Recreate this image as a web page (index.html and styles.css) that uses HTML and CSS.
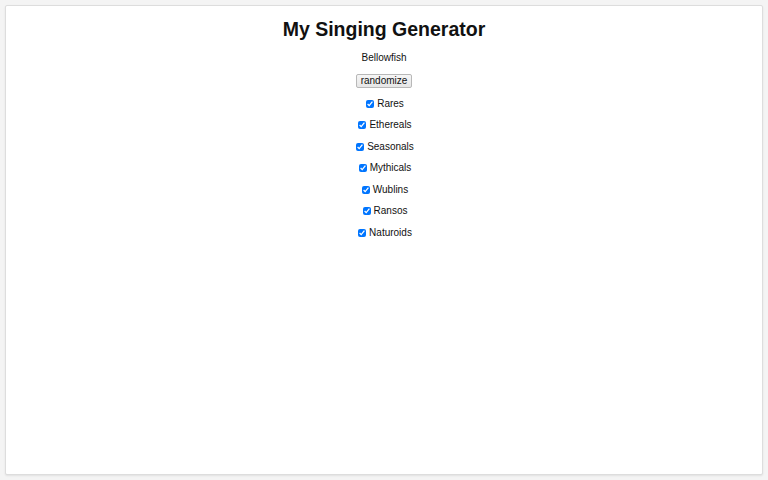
FILE: index.html
```html
<html>
    <head>
        <title>My Singing Generator</title>
        <link rel="stylesheet" href="styles.css">
    </head>
    <body>
        <div class="card">
            <h1>My Singing Generator</h1>
            <p id="monster">Bellowfish</p>
            <p><button id="randomize">randomize</button></p>
            <p><label><input type="checkbox" checked />Rares</label></p>
            <p><label><input type="checkbox" checked />Ethereals</label></p>
            <p><label><input type="checkbox" checked />Seasonals</label></p>
            <p><label><input type="checkbox" checked />Mythicals</label></p>
            <p><label><input type="checkbox" checked />Wublins</label></p>
            <p><label><input type="checkbox" checked />Ransos</label></p>
            <p><label><input type="checkbox" checked />Naturoids</label></p>
        </div>
    </body>
</html>
```

FILE: styles.css
```css
html, body {
    height: 100%;
}

body {
    background: #f4f4f4;
    box-sizing: border-box;
    color: #111;
    font-family: "Liberation Sans", Arial, sans-serif;
    font-size: 10px;
    margin: 0;
    padding: 5px;
}

.card {
    background: #fff;
    border: 1px solid #ddd;
    border-radius: 2px;
    box-shadow: 0 1px 2px rgba(0, 0, 0, 0.08);
    box-sizing: border-box;
    height: 100%;
    padding-top: 12px;
    text-align: center;
}

h1 {
    font-size: 19.5px;
    line-height: 23px;
    margin: 0 0 11px 0;
}

p {
    line-height: 11.5px;
    margin: 0 0 10px 0;
}

button {
    background: linear-gradient(#f6f6f6, #e6e6e6);
    border: 1px solid #b8b8b8;
    border-radius: 2px;
    color: #111;
    font-family: inherit;
    font-size: 10px;
    line-height: 12px;
    padding: 0 4px;
}

input[type=checkbox] {
    height: 8px;
    margin: 0 3px 0 2px;
    vertical-align: -1px;
    width: 8px;
}
```
